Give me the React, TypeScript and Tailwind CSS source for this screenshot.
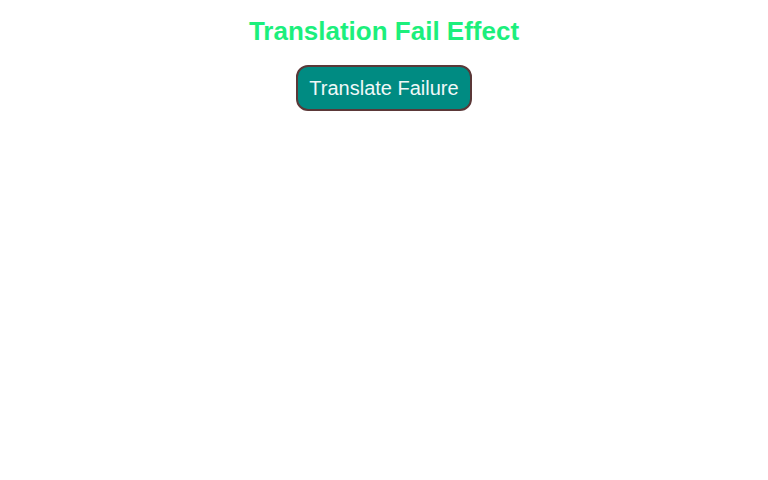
import React from 'react';

export default function App() {
  return (
    <div className="min-h-[480px] bg-white flex flex-col items-center font-['Liberation_Sans',Arial,sans-serif]">
      <h1 className="mt-[16px] text-[26px] leading-[30px] font-bold text-[#1cef7c]">Translation Fail Effect</h1>
      <button className="mt-[19px] h-[46px] px-[11px] rounded-[12px] border-2 border-[#5b3838] bg-[#008b82] text-[20px] text-[#f0f8f8]">
        Translate Failure
      </button>
    </div>
  );
}
